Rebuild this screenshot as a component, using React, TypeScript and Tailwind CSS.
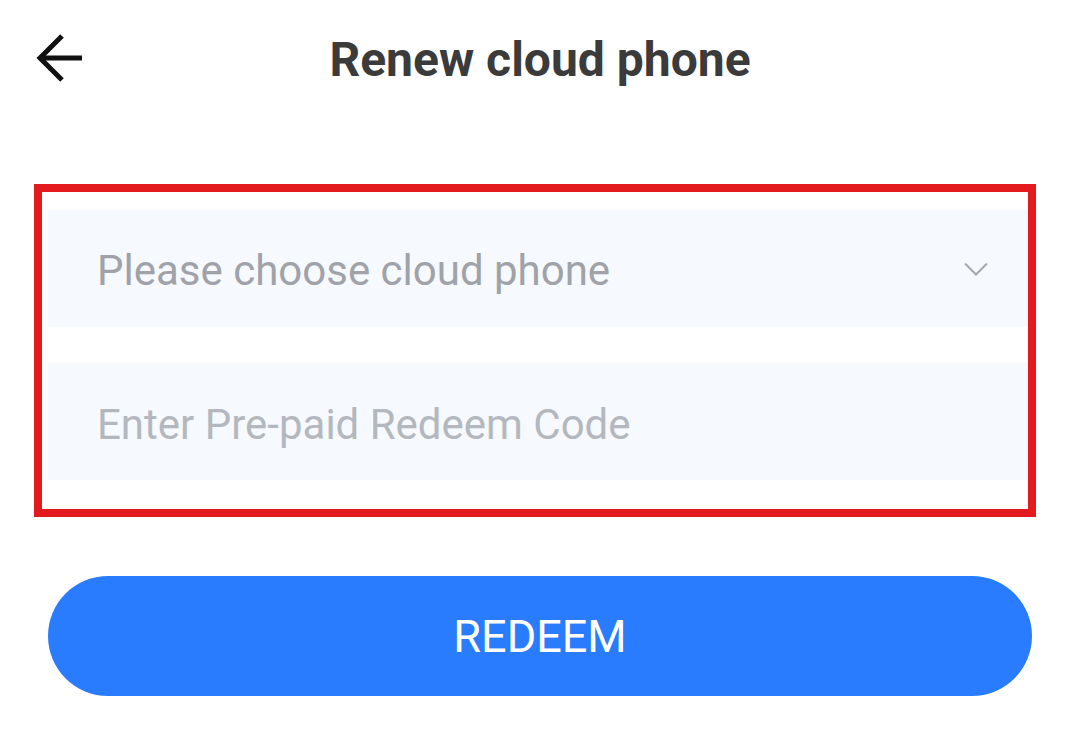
import { useState } from 'react';

export default function App() {
  const [code, setCode] = useState('');

  return (
    <div className="relative w-[1080px] h-[740px] bg-white overflow-hidden" style={{ fontFamily: 'Roboto, "Liberation Sans", sans-serif' }}>
      {/* header */}
      <div className="relative flex items-center justify-center h-[120px]">
        <button className="absolute left-[36px] top-[33px] w-[50px] h-[50px] flex items-center justify-center">
          <svg width="50" height="50" viewBox="36 33 50 50" fill="none" stroke="#111" strokeWidth={5}>
            <path d="M62 36L40 58L62 80" strokeLinejoin="miter" />
            <path d="M40 58H82" />
          </svg>
        </button>
        <h1 className="text-[48px] font-bold text-[#3b3b3b] leading-none">Renew cloud phone</h1>
      </div>

      <div className="px-[48px] mt-[90px] flex flex-col gap-[36px]">
        <div className="h-[117px] bg-[#f6f9fe] flex items-center justify-between pl-[49px] pr-[44px]">
          <span className="text-[42px] leading-none text-[#9fa3a9] mt-[4px]">Please choose cloud phone</span>
          <svg width="24" height="14" viewBox="0 0 24 14" fill="none" stroke="#a3a7ad" strokeWidth={2}>
            <path d="M1 1.5L12 12.5L23 1.5" />
          </svg>
        </div>
        <div className="h-[117px] bg-[#f6f9fe] flex items-center pl-[49px] pr-[44px]">
          <input
            value={code}
            onChange={(e) => setCode(e.target.value)}
            placeholder="Enter Pre-paid Redeem Code"
            className="w-full bg-transparent outline-none text-[42px] leading-none mt-[6px] text-[#333] placeholder:text-[#b3b8bf]"
          />
        </div>
      </div>

      <div className="px-[48px] mt-[96px]">
        <button className="w-full h-[120px] rounded-full bg-[#2a7cff] text-white text-[45px] pt-[2px]">
          REDEEM
        </button>
      </div>

      {/* annotation */}
      <div className="absolute left-[34px] top-[184px] w-[1002px] h-[333px] border-[8px] border-[#e31b1e] pointer-events-none" />
    </div>
  );
}
